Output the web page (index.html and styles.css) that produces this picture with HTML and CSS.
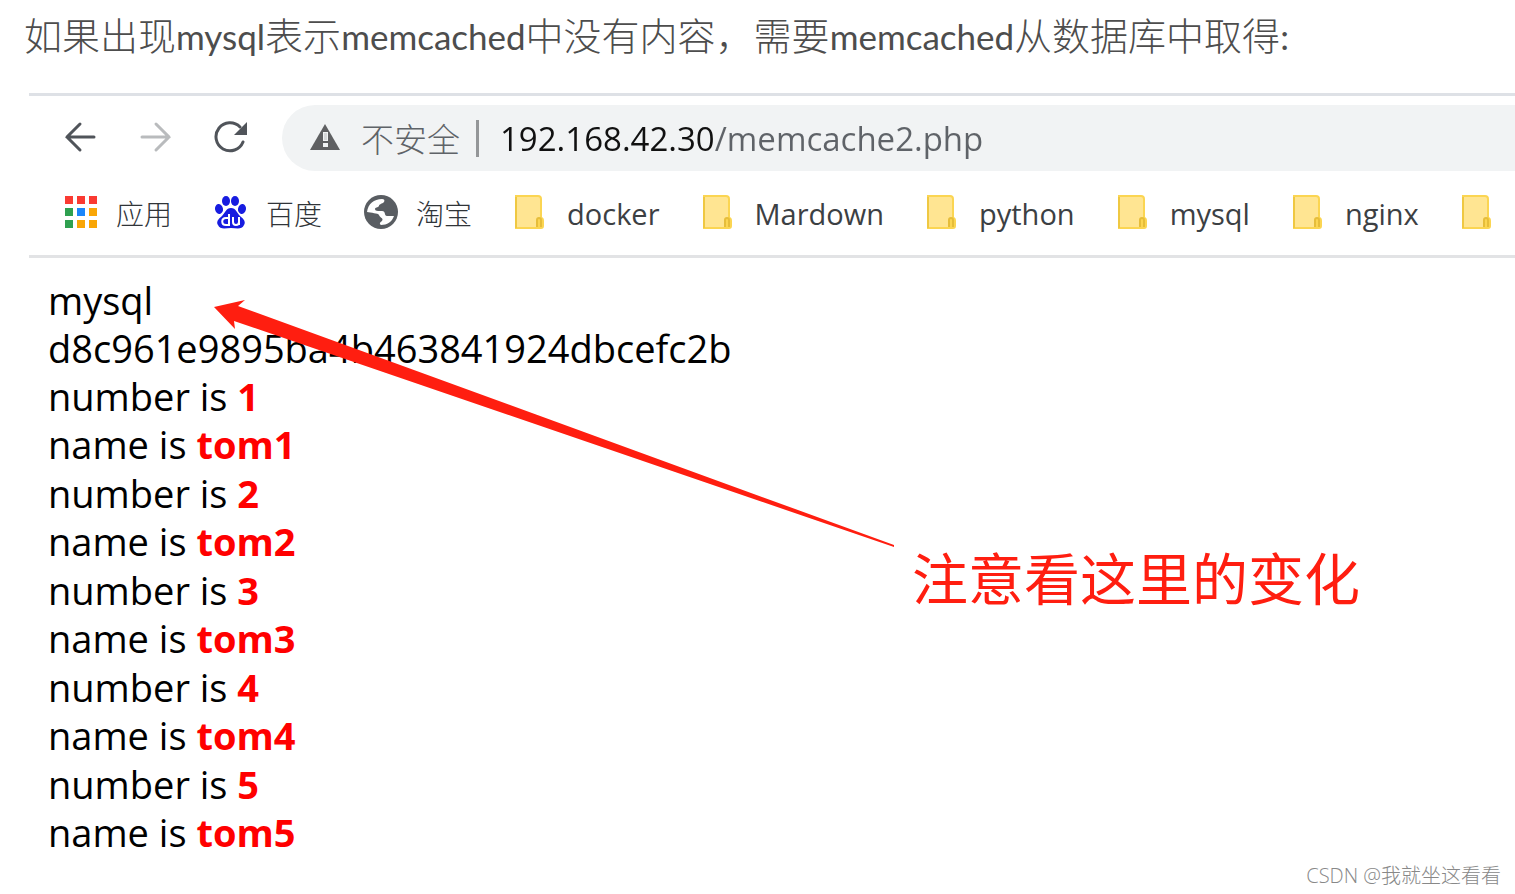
FILE: index.html
```html
<!DOCTYPE html>
<html lang="zh-CN">
  <head>
    <meta charset="UTF-8" />
    <meta name="viewport" content="width=device-width, initial-scale=1.0" />
    <title>memcache2.php</title>
    <link rel="stylesheet" href="styles.css">
  </head>
  <body>
    <p class="intro">如果出现<span>mysql</span>表示<span>memcached</span>中没有内容，需要<span>memcached</span>从数据库中取得<span>:</span></p>

    <div class="browser">
      <div class="toolbar">
        <button class="tool" aria-label="后退">
          <svg width="34" height="34" viewBox="0 0 34 34" fill="none" stroke="#50545a" stroke-width="3" stroke-linecap="round"><path d="M31 16H4M17 3L4 16l13 13" /></svg>
        </button>
        <button class="tool" aria-label="前进">
          <svg width="34" height="34" viewBox="0 0 34 34" fill="none" stroke="#b9bbbd" stroke-width="3" stroke-linecap="round"><path d="M4 16h27M18 3l13 13-13 13" /></svg>
        </button>
        <button class="tool" aria-label="刷新">
          <svg width="34" height="34" viewBox="0 0 34 34"><path d="M30 21A14 14 0 1 1 27 6" fill="none" stroke="#50545a" stroke-width="3" stroke-linecap="round" /><path d="M34 1v13H21z" fill="#50545a" /></svg>
        </button>
        <div class="address">
          <svg width="30" height="28" viewBox="0 0 30 28"><path d="M15 0l15 26H0z" fill="#5f6062" /><path d="M13 8h5v9h-5zM13 19h5v4h-5z" fill="#f1f3f4" /><path d="M14 9h3v7h-3z" fill="#d6d8d9" /></svg>
          <label for="url">不安全</label>
          <span class="bar"></span>
          <input id="url" type="text" value="192.168.42.30/memcache2.php" />
        </div>
      </div>

      <nav class="bookmarks">
        <a href="#">
          <svg width="36" height="36" viewBox="0 0 36 36"><path d="M2 1h8v8H2zM14 1h8v8h-8zM26 1h8v8h-8z" fill="#fa3a32" /><path d="M2 13h8v8H2zM2 25h8v8H2z" fill="#2fa050" /><path d="M14 13h8v8h-8z" fill="#1a86fb" /><path d="M26 13h8v8h-8zM14 25h8v8h-8zM26 25h8v8h-8z" fill="#f9a606" /></svg>
          应用
        </a>
        <a href="#">
          <svg width="36" height="36" viewBox="0 0 36 36" fill="#171ce0">
            <ellipse cx="13" cy="6" rx="4" ry="5" /><ellipse cx="22" cy="6" rx="4" ry="5" />
            <ellipse cx="6" cy="14" rx="4" ry="5" transform="rotate(-12 6 14)" /><ellipse cx="29" cy="14" rx="4" ry="5" transform="rotate(12 29 14)" />
            <path d="M18 13c5 0 6 5 9 8 4 3 6 6 4 9-2 5-8 3-13 3s-11 2-13-3c-2-3 0-6 4-9 3-3 4-8 9-8z" />
            <g fill="none" stroke="#fff" stroke-width="2"><path d="M16 19v11h-3c-5 0-5-7 0-7h3M20 22v5c0 4 6 4 6 0v-5v8" /></g>
          </svg>
          百度
        </a>
        <a href="#">
          <svg width="36" height="36" viewBox="0 0 36 36"><circle cx="18" cy="17" r="17" fill="#595d62" /><path d="M4 17C5 9 11 4 19 4c2 0 3 1 2 3-2 2-5 2-5 4-1 2-4 1-4 3 0 1 1 2 3 2h4c4 0 2 5 5 5h7c-2 6-7 9-13 9-2-1-1-3 1-4 2-3-2-3-3-6-1-2-8-2-12-3z" fill="#fff" /><path d="M24 5c5 2 7 6 7 10h-5c-2 0-1-2-3-3-2-2-1-5 1-7z" fill="#595d62" /></svg>
          淘宝
        </a>
        <a class="latin" href="#"><svg width="36" height="36" viewBox="0 0 36 36"><use href="#folder" /></svg>docker</a>
        <a class="latin" href="#"><svg width="36" height="36" viewBox="0 0 36 36"><use href="#folder" /></svg>Mardown</a>
        <a class="latin" href="#"><svg width="36" height="36" viewBox="0 0 36 36"><use href="#folder" /></svg>python</a>
        <a class="latin" href="#"><svg width="36" height="36" viewBox="0 0 36 36"><use href="#folder" /></svg>mysql</a>
        <a class="latin" href="#"><svg width="36" height="36" viewBox="0 0 36 36"><use href="#folder" /></svg>nginx</a>
        <a class="latin" href="#" aria-label="文件夹"><svg width="36" height="36" viewBox="0 0 36 36">
          <g id="folder"><path d="M3 1h22q3 0 3 3v19q2 0 2 3v5q0 2-2 2H3z" fill="#ffe592" stroke="#fbd552" stroke-width="2" /><path d="M3 2v31" stroke="#efc842" stroke-width="2" /><path d="M24 32v-7q0-2 2-2t2 2v7" fill="#fbd552" stroke="#e6bd3a" stroke-width="2" /></g>
        </svg></a>
      </nav>

      <main class="output">
        <div>mysql</div>
        <div>d8c961e9895ba4b463841924dbcefc2b</div>
        <div class="row">number is <b>1</b><br />name is <b>tom1</b></div>
        <div class="row">number is <b>2</b><br />name is <b>tom2</b></div>
        <div class="row">number is <b>3</b><br />name is <b>tom3</b></div>
        <div class="row">number is <b>4</b><br />name is <b>tom4</b></div>
        <div class="row">number is <b>5</b><br />name is <b>tom5</b></div>

        <svg class="arrow" width="682" height="250" viewBox="0 0 682 250"><path d="M0 7L31 0l-7 6 656 239v2L20 21l1 8z" fill="#ff1e10" /></svg>
        <div class="note">注意看这里的变化</div>
      </main>
    </div>

    <footer class="watermark">CSDN @我就坐这看看</footer>
  </body>
</html>
```
FILE: styles.css
```css
* {
  box-sizing: border-box;
}
body {
  margin: 0;
  background: #fff;
  font-family: "Open Sans", "Noto Sans CJK SC", sans-serif;
  overflow: hidden;
}
.intro {
  margin: 0;
  padding: 7px 24px 0;
  height: 93px;
  font-family: Lato, "Noto Sans CJK SC", sans-serif;
  font-size: 38px;
  font-weight: 300;
  line-height: 56px;
  color: #4d4d4d;
  white-space: nowrap;
}
.intro span {
  font-size: 35px;
  font-weight: 400;
}
.browser {
  margin-left: 29px;
  border-top: 3px solid #dee1e6;
}
.toolbar {
  display: flex;
  align-items: center;
  gap: 41px;
  padding: 9px 0 0 34px;
}
.tool {
  width: 34px;
  height: 34px;
  padding: 0;
  border: 0;
  background: none;
}
.tool svg {
  display: block;
}
.address {
  flex: 1;
  display: flex;
  align-items: center;
  height: 66px;
  margin-left: -6px;
  padding-left: 28px;
  border-radius: 33px 0 0 33px;
  background: #f1f3f4;
  font-size: 33px;
  color: #5f6368;
}
.address label {
  margin-left: 21px;
  font-weight: 300;
}
.bar {
  width: 3px;
  height: 37px;
  margin: 0 21px 0 16px;
  background: #949698;
}
/* host is black, the path after it grey */
.address input {
  flex: 1;
  min-width: 0;
  padding: 0;
  border: 0;
  outline: 0;
  font: inherit;
  background: linear-gradient(to right, #111 214px, #5f6368 214px);
  -webkit-background-clip: text;
  background-clip: text;
  -webkit-text-fill-color: transparent;
}
.bookmarks {
  display: flex;
  align-items: center;
  gap: 41px;
  height: 87px;
  padding-left: 34px;
  border-bottom: 3px solid #e2e3e5;
  overflow: hidden;
}
.bookmarks a {
  display: flex;
  align-items: center;
  gap: 17px;
  flex-shrink: 0;
  font-size: 28px;
  font-weight: 300;
  color: #303438;
  text-decoration: none;
}
.bookmarks .latin {
  gap: 18px;
  font-size: 29px;
  font-weight: 400;
  color: #3c4043;
}
.output {
  position: relative;
  padding: 18px 0 0 19px;
  font-size: 38px;
  line-height: 48px;
  color: #000;
}
.row {
  margin-bottom: 1px;
}
.row b {
  color: #f00;
}
.arrow {
  position: absolute;
  left: 185px;
  top: 42px;
}
.note {
  position: absolute;
  left: 883px;
  top: 278px;
  font-size: 56px;
  line-height: 84px;
  color: #ff1e10;
  white-space: nowrap;
}
.watermark {
  padding: 5px 14px 0 0;
  text-align: right;
  font-size: 20px;
  font-weight: 300;
  line-height: 28px;
  color: #888;
}
```
